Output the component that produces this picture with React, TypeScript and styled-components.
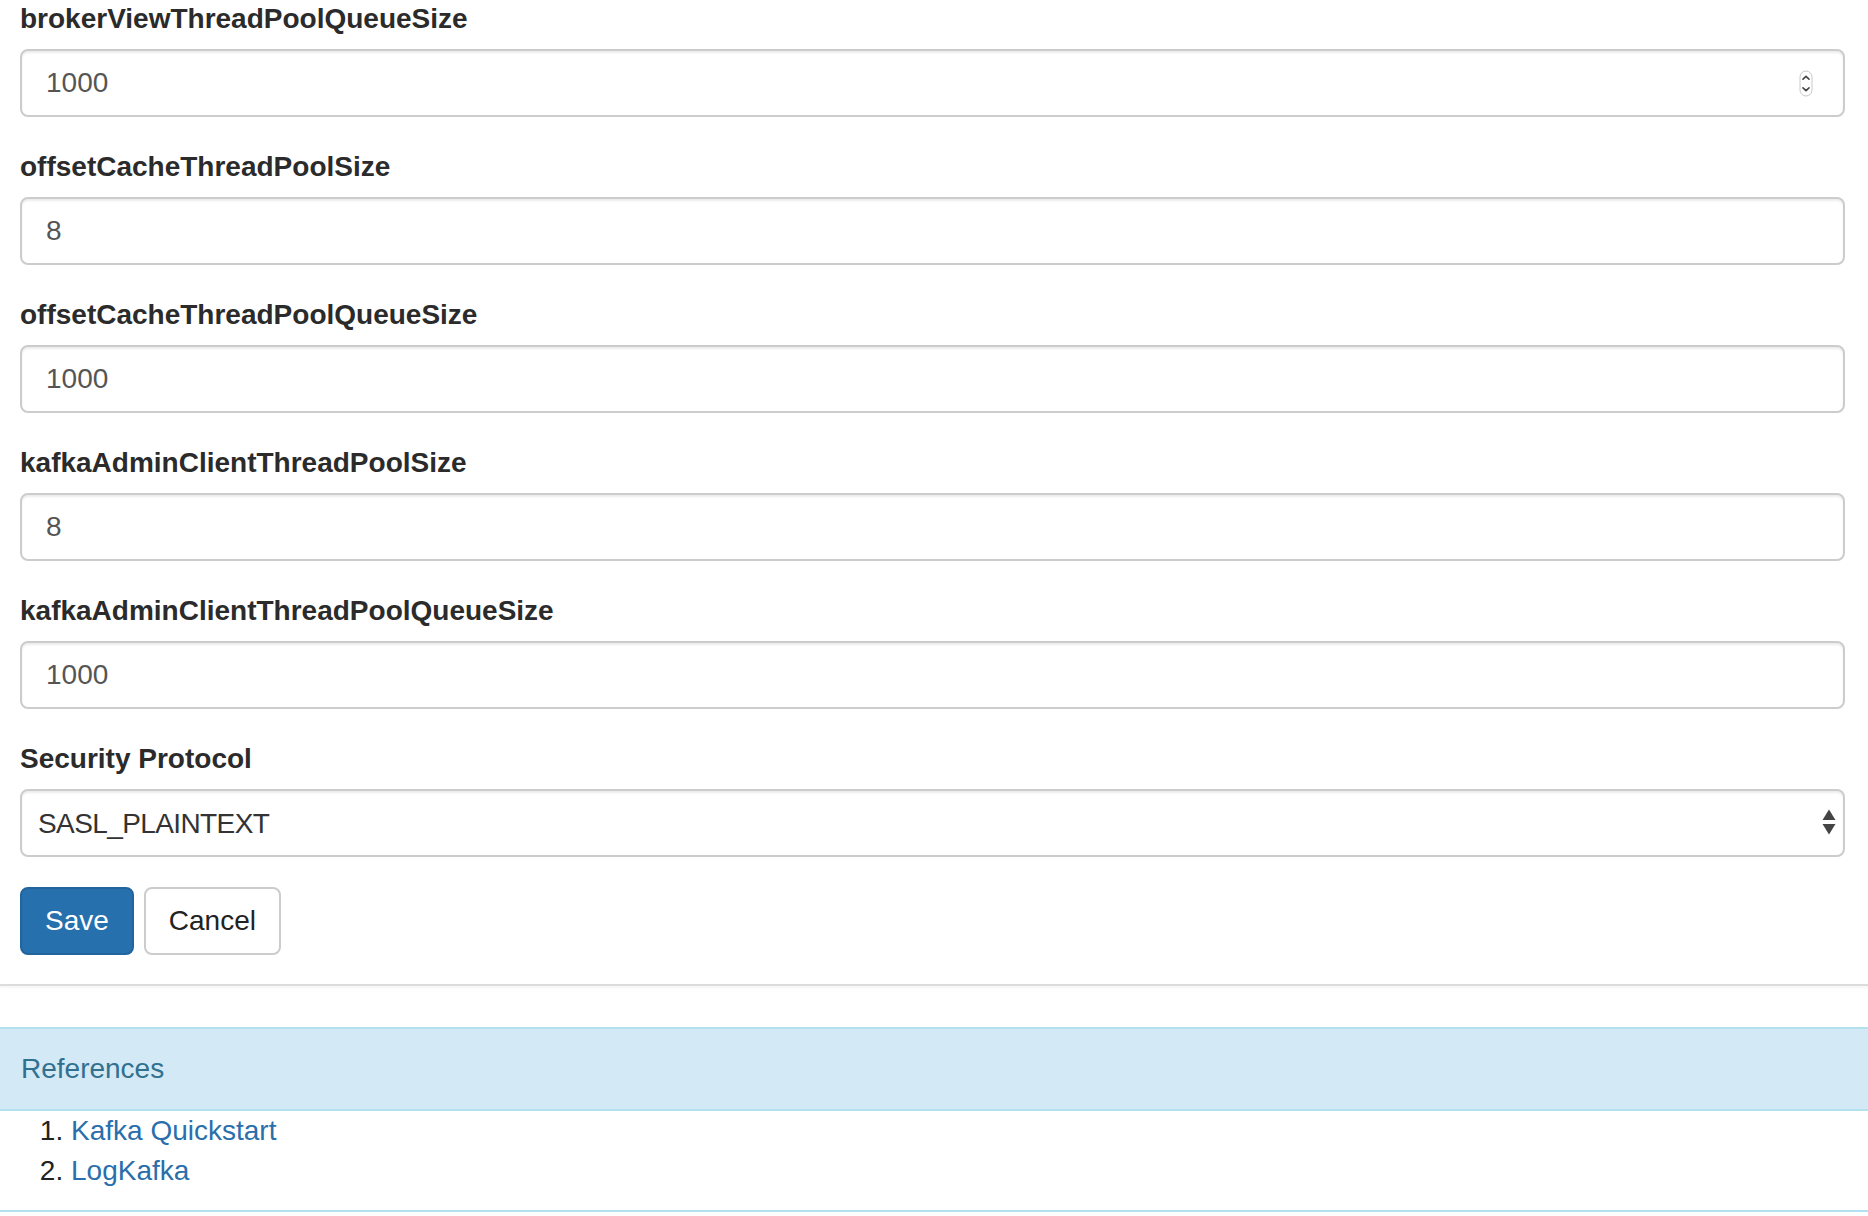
import React from "react";
import styled, { createGlobalStyle } from "styled-components";

const Global = createGlobalStyle`
  html, body { margin: 0; padding: 0; background: #fff; }
  body {
    font-family: "Liberation Sans", Arial, Helvetica, sans-serif;
    font-size: 28px;
    line-height: 40px;
    color: #333;
  }
  * { box-sizing: border-box; }
`;

const Page = styled.div`
  width: 1868px;
  height: 1216px;
  overflow: hidden;
`;

const Form = styled.form`
  padding: 0 23px 0 20px;
  margin-top: -1px;
`;

const Group = styled.div`
  margin-bottom: 30px;
`;

const Label = styled.label`
  display: block;
  font-weight: bold;
  line-height: 40px;
  margin-bottom: 10px;
  color: #2b2b2b;
`;

const Field = styled.div`
  position: relative;
`;

const TextInput = styled.input`
  display: block;
  width: 100%;
  height: 68px;
  padding: 12px 24px;
  font-family: inherit;
  font-size: 28px;
  line-height: 40px;
  color: #555;
  background: #fff;
  border: 2px solid #ccc;
  border-radius: 8px;
  box-shadow: inset 0 2px 2px rgba(0, 0, 0, 0.075);
  outline: none;
`;

const Select = styled.select`
  display: block;
  width: 100%;
  height: 68px;
  padding: 0 60px 0 16px;
  font-family: inherit;
  font-size: 28px;
  letter-spacing: -0.6px;
  color: #333;
  background: #fff;
  border: 2px solid #ccc;
  border-radius: 8px;
  box-shadow: inset 0 2px 2px rgba(0, 0, 0, 0.075);
  appearance: none;
  -webkit-appearance: none;
  outline: none;
`;

const Spinner = styled.svg`
  position: absolute;
  right: 32px;
  top: 21px;
  pointer-events: none;
`;

const SelectArrows = styled.svg`
  position: absolute;
  right: 9px;
  top: 20px;
  pointer-events: none;
`;

const Buttons = styled.div`
  display: flex;
  gap: 10px;
`;

const Button = styled.button<{ $primary?: boolean }>`
  height: 68px;
  padding: 12px 23px;
  font-family: inherit;
  font-size: 28px;
  line-height: 40px;
  border-radius: 8px;
  border: 2px solid ${(p) => (p.$primary ? "#22649d" : "#ccc")};
  background: ${(p) => (p.$primary ? "#2670ae" : "#fff")};
  color: ${(p) => (p.$primary ? "#fff" : "#222")};
  cursor: pointer;
`;

const Rule = styled.hr`
  margin: 29px 0 0;
  border: 0;
  border-top: 2px solid #dcdcdc;
  box-shadow: 0 2px 2px #f4f4f4;
  height: 0;
`;

const Panel = styled.section`
  margin-top: 41px;
  border-top: 2px solid #b4e1ef;
  border-bottom: 2px solid #b4e1ef;
`;

const PanelHeading = styled.div`
  background: #d3e9f5;
  color: #31708f;
  padding: 20px 0 20px 21px;
  line-height: 40px;
  border-bottom: 2px solid #b4e1ef;
`;

const RefList = styled.ol`
  margin: 0 0 19px;
  padding-left: 71px;
  color: #222;
`;

const RefItem = styled.li`
  line-height: 40px;
`;

const RefLink = styled.a`
  color: #2a6fab;
  text-decoration: none;
`;

type FieldDef = { label: string; value: string; spinner?: boolean };

const fields: FieldDef[] = [
  { label: "brokerViewThreadPoolQueueSize", value: "1000", spinner: true },
  { label: "offsetCacheThreadPoolSize", value: "8" },
  { label: "offsetCacheThreadPoolQueueSize", value: "1000" },
  { label: "kafkaAdminClientThreadPoolSize", value: "8" },
  { label: "kafkaAdminClientThreadPoolQueueSize", value: "1000" },
];

export default function App() {
  return (
    <Page>
      <Global />
      <Form onSubmit={(e) => e.preventDefault()}>
        {fields.map((f) => (
          <Group key={f.label}>
            <Label>{f.label}</Label>
            <Field>
              <TextInput type="text" defaultValue={f.value} />
              {f.spinner && (
                <Spinner width="14" height="27" viewBox="0 0 14 27">
                  <rect x="1" y="1" width="12" height="25" rx="6" fill="#fff" stroke="#c8c8c8" strokeWidth="1" />
                  <path d="M4 9.2 L7 6.4 L10 9.2" fill="none" stroke="#444" strokeWidth="1.6" strokeLinecap="round" strokeLinejoin="round" />
                  <path d="M4 17.8 L7 20.6 L10 17.8" fill="none" stroke="#444" strokeWidth="1.6" strokeLinecap="round" strokeLinejoin="round" />
                </Spinner>
              )}
            </Field>
          </Group>
        ))}
        <Group>
          <Label>Security Protocol</Label>
          <Field>
            <Select defaultValue="SASL_PLAINTEXT">
              <option>PLAINTEXT</option>
              <option>SSL</option>
              <option>SASL_PLAINTEXT</option>
              <option>SASL_SSL</option>
            </Select>
            <SelectArrows width="14" height="26" viewBox="0 0 14 26">
              <polygon points="0.5,11 7,0.5 13.5,11" fill="#444" />
              <polygon points="0.5,15 13.5,15 7,25.5" fill="#444" />
            </SelectArrows>
          </Field>
        </Group>
        <Buttons>
          <Button type="submit" $primary>Save</Button>
          <Button type="button">Cancel</Button>
        </Buttons>
      </Form>
      <Rule />
      <Panel>
        <PanelHeading>References</PanelHeading>
        <RefList>
          <RefItem>
            <RefLink href="#">Kafka Quickstart</RefLink>
          </RefItem>
          <RefItem>
            <RefLink href="#">LogKafka</RefLink>
          </RefItem>
        </RefList>
      </Panel>
    </Page>
  );
}
